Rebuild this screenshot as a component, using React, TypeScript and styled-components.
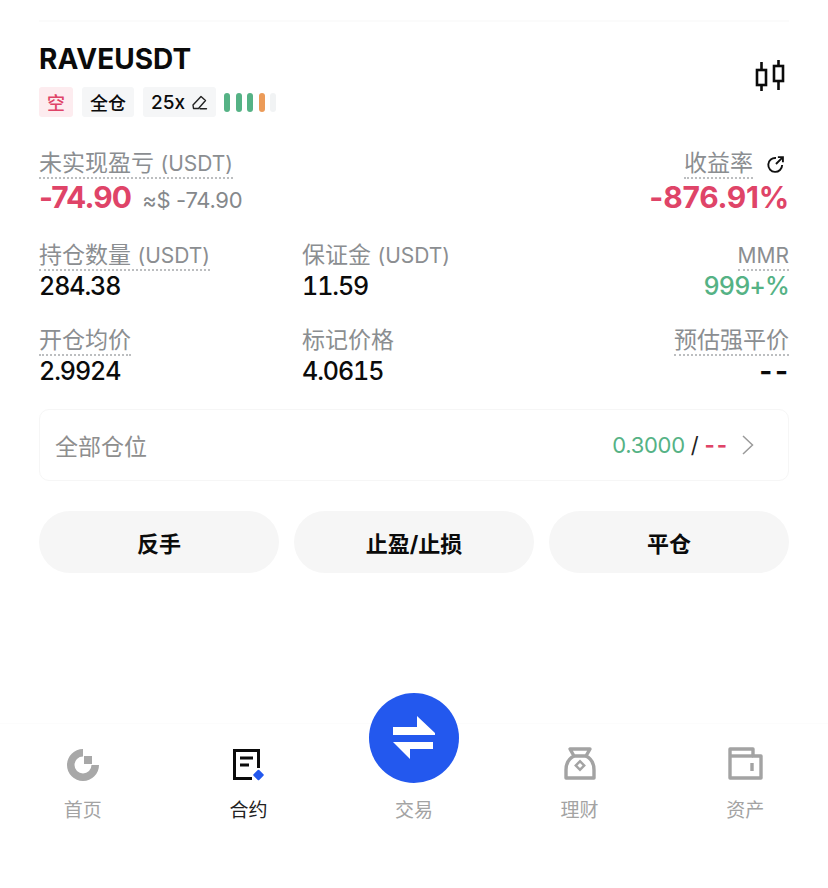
import React from "react";
import styled, { createGlobalStyle } from "styled-components";

const GlobalStyle = createGlobalStyle`
  html, body {
    margin: 0;
    padding: 0;
    background: #fff;
  }
  body {
    font-family: Inter, "Noto Sans CJK SC", "Liberation Sans", sans-serif;
    -webkit-font-smoothing: antialiased;
  }
`;

const Page = styled.div`
  width: 828px;
  height: 888px;
  display: flex;
  flex-direction: column;
  overflow: hidden;
  background: #fff;
`;

const Position = styled.section`
  height: 723px;
  box-sizing: border-box;
  padding: 0 39px;
  flex: none;
`;

const TopRule = styled.div`
  height: 2px;
  margin-top: 20px;
  background: #fbfbfb;
`;

const Header = styled.div`
  display: flex;
  justify-content: space-between;
  align-items: center;
  margin-top: 20px;
`;

const Symbol = styled.h1`
  margin: 0;
  font-size: 28px;
  line-height: 34px;
  font-weight: 700;
  letter-spacing: 0.05px;
  color: #0b0b0b;
`;

const ChartButton = styled.div`
  display: flex;
  margin-right: 4px;
  margin-top: 34px;
  height: 0;
  align-items: center;
`;

const Tags = styled.div`
  display: flex;
  align-items: center;
  gap: 9px;
  margin-top: 11px;
`;

const Tag = styled.span<{ $short?: boolean }>`
  display: inline-flex;
  align-items: center;
  gap: 6px;
  height: 30px;
  padding: 0 8px;
  border-radius: 3px;
  font-size: 18px;
  font-weight: 500;
  background: ${(p) => (p.$short ? "#fdecef" : "#f5f6f7")};
  color: ${(p) => (p.$short ? "#df4468" : "#0b0b0b")};
`;

const Leverage = styled(Tag)`
  font-size: 19px;
`;

const Risk = styled.div`
  display: flex;
  gap: 5.6px;
  margin-left: -1px;
`;

const RiskBar = styled.i<{ $color: string }>`
  display: block;
  width: 6px;
  height: 19px;
  border-radius: 3px;
  background: ${(p) => p.$color};
`;

const Stats = styled.div`
  display: grid;
  grid-template-columns: 263px 1fr auto;
  row-gap: 24px;
  margin-top: 32px;
`;

const Stat = styled.div<{ $right?: boolean }>`
  display: flex;
  flex-direction: column;
  align-items: ${(p) => (p.$right ? "flex-end" : "flex-start")};
`;

const Label = styled.span<{ $plain?: boolean }>`
  font-size: 23px;
  line-height: 28px;
  height: 28px;
  color: #8b8e91;
  border-bottom: 2px dotted ${(p) => (p.$plain ? "transparent" : "#bcbec0")};
  white-space: nowrap;
`;

const Unit = styled.span`
  font-size: 21px;
`;

const LabelRow = styled.div`
  display: flex;
  align-items: center;
  gap: 13px;
  margin-right: 4px;
`;

const Value = styled.span<{ $color?: string }>`
  font-size: 25px;
  line-height: 30px;
  font-weight: 500;
  font-variant-numeric: tabular-nums;
  letter-spacing: -1.05px;
  color: ${(p) => p.$color || "#0b0b0b"};
`;

const HealthValue = styled(Value)`
  letter-spacing: -0.8px;
`;

const EmptyValue = styled(Value)`
  font-size: 28px;
  font-weight: 700;
  letter-spacing: -2.5px;
  margin-right: 1px;
`;

const Pnl = styled.div`
  display: flex;
  align-items: baseline;
  gap: 11px;
`;

const BigValue = styled.span`
  font-size: 30px;
  line-height: 36px;
  font-weight: 700;
  letter-spacing: -0.25px;
  color: #df4468;
`;

const PnlValue = styled(BigValue)`
  letter-spacing: -0.9px;
`;

const Approx = styled.span`
  font-size: 22px;
  letter-spacing: -0.3px;
  color: #85888b;
`;

const WideStat = styled(Stat)`
  grid-column: 1 / 3;
  padding-bottom: 2px;
`;

const LowerStat = styled(Stat)`
  margin-top: 1px;
`;

const Summary = styled.div`
  display: flex;
  align-items: center;
  justify-content: space-between;
  height: 70px;
  margin-top: 23px;
  padding: 0 33px 0 15px;
  border: 1px solid #f6f6f6;
  border-radius: 10px;
`;

const SummaryLabel = styled.span`
  font-size: 23px;
  color: #8e8e8e;
`;

const SummaryValue = styled.div`
  display: flex;
  align-items: center;
  gap: 6px;
  font-size: 22px;
`;

const SummaryPart = styled.span<{ $color: string }>`
  color: ${(p) => p.$color};
  letter-spacing: -0.3px;
`;

const SummaryEmpty = styled(SummaryPart)`
  font-weight: 700;
  letter-spacing: 2px;
  margin-right: 6px;
`;

const Actions = styled.div`
  display: grid;
  grid-template-columns: repeat(3, 1fr);
  gap: 15px;
  margin-top: 30px;
`;

const ActionButton = styled.button`
  height: 62px;
  border: none;
  border-radius: 31px;
  background: #f6f6f6;
  color: #0b0b0b;
  font-family: inherit;
  font-size: 22px;
  font-weight: 700;
`;

const TabBar = styled.nav`
  position: relative;
  flex: 1;
  display: grid;
  grid-template-columns: repeat(5, 1fr);
  border-top: 1px solid #fcfcfc;
`;

const Tab = styled.div<{ $active?: boolean }>`
  display: flex;
  flex-direction: column;
  align-items: center;
  padding-top: 20px;
  gap: 14px;
  font-size: 19px;
  line-height: 26px;
  color: ${(p) => (p.$active ? "#222" : "#a3a3a3")};
`;

const TabIcon = styled.div`
  width: 40px;
  height: 40px;
`;

const Fab = styled.div`
  position: absolute;
  left: 369px;
  top: -31px;
  width: 90px;
  height: 90px;
  border-radius: 50%;
  background: #2358ee;
  display: flex;
  align-items: center;
  justify-content: center;
`;

const PencilIcon = () => (
  <svg width="17" height="17" viewBox="0 0 17 17" fill="none" stroke="#222" strokeWidth="1.4">
    <path d="M2 11 L10 2.5 L14.5 6.5 L7.5 14.5 H2.5 Z" strokeLinejoin="round" />
    <path d="M9 14.8 H15.5" strokeLinecap="round" />
  </svg>
);

const CandleIcon = () => (
  <svg width="30" height="32" viewBox="0 0 30 32" fill="none" stroke="#0b0b0b" strokeWidth="2.6">
    <path d="M6.5 2 V10 M6.5 25 V31 M23.5 0 V6 M23.5 21 V30" />
    <rect x="2" y="10" width="9" height="15" />
    <rect x="19" y="6" width="9" height="15" />
  </svg>
);

const RefreshIcon = () => (
  <svg width="19" height="19" viewBox="0 0 20 20" fill="none" stroke="#111" strokeWidth="2">
    <path d="M10.5 3.2 A7.3 7.3 0 1 0 17 10.5" />
    <path d="M10.5 9.5 L17.5 2.5 M12.5 2.2 H17.8 V7.5" />
  </svg>
);

const Chevron = () => (
  <svg width="14" height="22" viewBox="0 0 14 22" fill="none" stroke="#9a9a9a" strokeWidth="1.5">
    <path d="M2 2 L11.5 11 L2 20" />
  </svg>
);

const HomeIcon = () => (
  <svg viewBox="0 0 40 40" width="40" height="40">
    <path d="M20 5 A16 16 0 1 0 36 21 H28.5 A8.5 8.5 0 1 1 20 12.5 Z" fill="#a8a8a8" />
    <rect x="21" y="12" width="8" height="8" fill="#a8a8a8" />
  </svg>
);

const ContractIcon = () => (
  <svg viewBox="0 0 40 40" width="40" height="40">
    <path d="M30.5 24 V6.5 H6.5 V34.5 H24" fill="none" stroke="#0b0b0b" strokeWidth="3" />
    <path d="M12 14 H25 M12 21 H21" stroke="#0b0b0b" strokeWidth="3" fill="none" />
    <rect x="26.5" y="27" width="8" height="8" rx="1" transform="rotate(45 30.5 31)" fill="#2358ee" />
  </svg>
);

const TradeIcon = () => (
  <svg width="44" height="44" viewBox="0 0 44 44" fill="#fff">
    <path d="M1 11 H25 V0 L43 17 V19 H1 Z" />
    <path d="M1 26 H41 V33 H18 V43 Z" />
  </svg>
);

const EarnIcon = () => (
  <svg viewBox="0 0 40 40" width="40" height="40" fill="none" stroke="#a3a3a3" strokeWidth="3.4">
    <path d="M10 5 H30 L26 12 H14 Z" strokeLinejoin="round" />
    <path d="M14 12 C8 15 6 21 6 26 V34 H34 V26 C34 21 32 15 26 12" strokeLinejoin="round" />
    <rect x="17" y="18.5" width="6" height="6" transform="rotate(45 20 21.5)" strokeWidth="2.4" />
  </svg>
);

const WalletIcon = () => (
  <svg viewBox="0 0 40 40" width="40" height="40" fill="none" stroke="#a3a3a3" strokeWidth="3.4">
    <path d="M5 34 V5 H28 V12 H36 V34 Z" strokeLinejoin="round" />
    <path d="M5 12 H28" />
    <path d="M27 19 V27" strokeWidth="3.4" />
  </svg>
);

const riskColors = ["#55b285", "#55b285", "#55b285", "#ec9b58", "#f1f3f4"];

const tabs = [
  { label: "首页", icon: <HomeIcon /> },
  { label: "合约", icon: <ContractIcon />, active: true },
  { label: "交易" },
  { label: "理财", icon: <EarnIcon /> },
  { label: "资产", icon: <WalletIcon /> },
];

export default function App() {
  return (
    <Page>
      <GlobalStyle />
      <Position>
        <TopRule />
        <Header>
          <Symbol>RAVEUSDT</Symbol>
          <ChartButton>
            <CandleIcon />
          </ChartButton>
        </Header>
        <Tags>
          <Tag $short>空</Tag>
          <Tag>全仓</Tag>
          <Leverage>
            25x <PencilIcon />
          </Leverage>
          <Risk>
            {riskColors.map((color, i) => (
              <RiskBar key={i} $color={color} />
            ))}
          </Risk>
        </Tags>
        <Stats>
          <WideStat>
            <Label>
              未实现盈亏 <Unit>(USDT)</Unit>
            </Label>
            <Pnl>
              <PnlValue>-74.90</PnlValue>
              <Approx>≈$ -74.90</Approx>
            </Pnl>
          </WideStat>
          <Stat $right>
            <LabelRow>
              <Label>收益率</Label>
              <RefreshIcon />
            </LabelRow>
            <BigValue>-876.91%</BigValue>
          </Stat>
          <Stat>
            <Label>
              持仓数量 <Unit>(USDT)</Unit>
            </Label>
            <Value>284.38</Value>
          </Stat>
          <Stat>
            <Label $plain>
              保证金 <Unit>(USDT)</Unit>
            </Label>
            <Value>11.59</Value>
          </Stat>
          <Stat $right>
            <Label>
              <Unit>MMR</Unit>
            </Label>
            <HealthValue $color="#55b285">999+%</HealthValue>
          </Stat>
          <LowerStat>
            <Label>开仓均价</Label>
            <Value>2.9924</Value>
          </LowerStat>
          <LowerStat>
            <Label $plain>标记价格</Label>
            <Value>4.0615</Value>
          </LowerStat>
          <LowerStat $right>
            <Label>预估强平价</Label>
            <EmptyValue>--</EmptyValue>
          </LowerStat>
        </Stats>
        <Summary>
          <SummaryLabel>全部仓位</SummaryLabel>
          <SummaryValue>
            <SummaryPart $color="#55b285">0.3000</SummaryPart>
            <SummaryPart $color="#222">/</SummaryPart>
            <SummaryEmpty $color="#df4468">--</SummaryEmpty>
            <Chevron />
          </SummaryValue>
        </Summary>
        <Actions>
          <ActionButton>反手</ActionButton>
          <ActionButton>止盈/止损</ActionButton>
          <ActionButton>平仓</ActionButton>
        </Actions>
      </Position>
      <TabBar>
        <Fab>
          <TradeIcon />
        </Fab>
        {tabs.map((tab) => (
          <Tab key={tab.label} $active={tab.active}>
            <TabIcon>{tab.icon}</TabIcon>
            {tab.label}
          </Tab>
        ))}
      </TabBar>
    </Page>
  );
}
